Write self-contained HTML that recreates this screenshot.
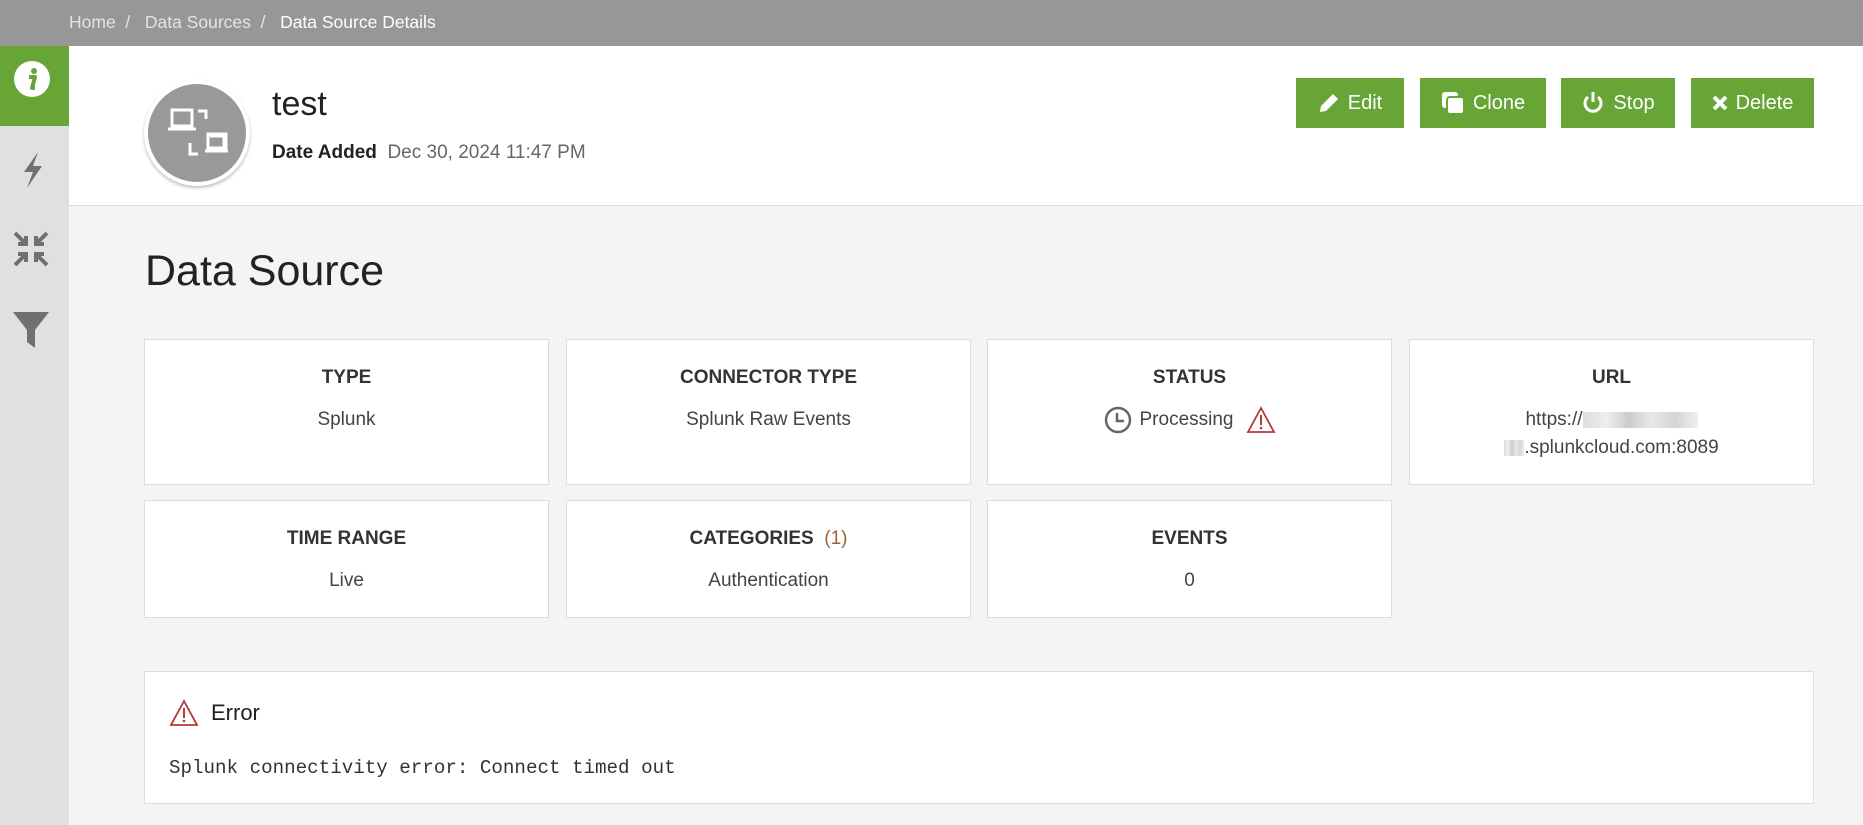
<!DOCTYPE html>
<html><head><meta charset="utf-8"><style>
*{box-sizing:border-box;margin:0;padding:0}
body{width:1863px;height:825px;overflow:hidden;background:#f4f4f4;font-family:"Liberation Sans",sans-serif;color:#333;position:relative}
.bc{position:absolute;left:0;top:0;width:1863px;height:46px;background:#979797;color:#e4e4e4;font-size:17.5px;line-height:44px;padding-left:69px}
.bc b{color:#fff;font-weight:normal}
.side{position:absolute;left:0;top:46px;width:69px;height:779px;background:#e0e0e0}
.act{position:absolute;left:0;top:0;width:69px;height:80px;background:#66a536}
.hdr{position:absolute;left:69px;top:46px;width:1794px;height:160px;background:#fff;border-bottom:1px solid #ddd}
.av{position:absolute;left:144px;top:80px;width:106px;height:106px;border-radius:50%;background:#999;border:4px solid #fff;box-shadow:0 2px 3px rgba(0,0,0,.25)}
.btn{position:absolute;top:77px;height:50px;background:#66a536;color:#fff;font-size:20px;line-height:50px;display:flex;align-items:center;justify-content:center;gap:8px}
.card{position:absolute;background:#fff;border:1px solid #ddd;text-align:center}
.card .t{font-weight:bold;font-size:19px;color:#333;margin-top:27px}
.card .v{font-size:19px;color:#444;margin-top:17px;line-height:28px}
.blur{display:inline-block;height:16px;background:linear-gradient(90deg,#ddd,#eee,#ccc,#e8e8e8,#d5d5d5,#eee);vertical-align:middle}
</style></head><body>
<div class="bc">Home &nbsp;/ &nbsp; Data Sources &nbsp;/ &nbsp; <b>Data Source Details</b></div>
<div class="side">
 <div class="act"><svg style="position:absolute;left:13px;top:14px" width="38" height="38" viewBox="0 0 38 38"><circle cx="19" cy="19" r="18" fill="#fff"/><circle cx="21" cy="11" r="3" fill="#66a536"/><path d="M16 17h6l-3 11h3" stroke="#66a536" stroke-width="4" fill="none" stroke-linejoin="round"/></svg></div>
 <svg style="position:absolute;left:18px;top:104px" width="30" height="40" viewBox="0 0 30 40"><path d="M20 2L6 22h9L9 38 24 16h-9z" fill="#707070"/></svg>
 <svg style="position:absolute;left:12px;top:184px" width="38" height="38" viewBox="0 0 38 38" stroke="#707070" stroke-width="4" fill="none"><path d="M3 3l11 11M14 6v8H6M35 3L24 14M24 6v8h8M3 35l11-11M6 24h8v8M35 35L24 24M32 24h-8v8"/></svg>
 <svg style="position:absolute;left:11px;top:264px" width="40" height="40" viewBox="0 0 40 40"><path d="M2 2h36L24 20v18l-8-6V20z" fill="#707070"/></svg>
</div>
<div class="hdr"></div>
<div class="av"><svg style="position:absolute;left:20px;top:22px" width="60" height="56" viewBox="0 0 60 56" fill="none" stroke="#fff" stroke-width="3"><rect x="4" y="4" width="20" height="16"/><path d="M0 23h28M30 5h8v8M22 37v11h8M42 30h14v12"/><rect x="40" y="28" width="18" height="14"/><path d="M37 45h23"/></svg></div>
<div style="position:absolute;left:272px;top:85px;font-size:34px;color:#222">test</div>
<div style="position:absolute;left:272px;top:142px;font-size:19px;color:#222"><b>Date Added</b>&nbsp; <span style="color:#666">Dec 30, 2024 11:47 PM</span></div>
<div class="btn" style="left:1296px;width:108px;top:78px"><svg width="22" height="22" viewBox="0 0 22 22"><path d="M2 20l1-6L15 2l5 5L8 19z" fill="#fff"/></svg>Edit</div>
<div class="btn" style="left:1420px;width:126px;top:78px"><svg width="24" height="24" viewBox="0 0 24 24"><rect x="1" y="1" width="16" height="16" rx="3" fill="#fff"/><rect x="6" y="6" width="17" height="17" rx="3" fill="#fff" stroke="#66a536" stroke-width="2"/></svg>Clone</div>
<div class="btn" style="left:1561px;width:114px;top:78px"><svg width="24" height="24" viewBox="0 0 24 24" fill="none" stroke="#fff" stroke-width="3"><path d="M7 6a8 8 0 1 0 10 0M12 1v10"/></svg>Stop</div>
<div class="btn" style="left:1691px;width:123px;top:78px"><svg width="16" height="16" viewBox="0 0 16 16" stroke="#fff" stroke-width="4"><path d="M2 2l12 12M14 2L2 14"/></svg>Delete</div>
<div style="position:absolute;left:145px;top:247px;font-size:43px;color:#222">Data Source</div>
<div class="card" style="left:144px;top:339px;width:405px;height:146px"><div class="t">TYPE</div><div class="v">Splunk</div></div>
<div class="card" style="left:566px;top:339px;width:405px;height:146px"><div class="t">CONNECTOR TYPE</div><div class="v">Splunk Raw Events</div></div>
<div class="card" style="left:987px;top:339px;width:405px;height:146px"><div class="t">STATUS</div><div class="v" style="display:flex;justify-content:center;align-items:center;gap:8px"><svg width="28" height="28" viewBox="0 0 28 28" fill="none" stroke="#666" stroke-width="2.5"><circle cx="14" cy="14" r="12"/><path d="M13 7v8h7"/></svg>Processing<svg style="margin-left:4px" width="30" height="28" viewBox="0 0 30 28"><path d="M15 2L2 26h26z" fill="none" stroke="#b03a3a" stroke-width="1.8"/><path d="M15 9v10" stroke="#b03a3a" stroke-width="2"/><circle cx="15" cy="22" r="1.3" fill="#b03a3a"/></svg></div></div>
<div class="card" style="left:1409px;top:339px;width:405px;height:146px"><div class="t">URL</div><div class="v">https://<span class="blur" style="width:115px"></span><br><span class="blur" style="width:20px"></span>.splunkcloud.com:8089</div></div>
<div class="card" style="left:144px;top:500px;width:405px;height:118px"><div class="t">TIME RANGE</div><div class="v">Live</div></div>
<div class="card" style="left:566px;top:500px;width:405px;height:118px"><div class="t">CATEGORIES <span style="font-weight:normal;color:#a0622d">&nbsp;(1)</span></div><div class="v">Authentication</div></div>
<div class="card" style="left:987px;top:500px;width:405px;height:118px"><div class="t">EVENTS</div><div class="v">0</div></div>
<div class="card" style="left:144px;top:671px;width:1670px;height:133px;text-align:left">
 <div style="position:absolute;left:24px;top:27px;display:flex;align-items:center;gap:12px;font-size:22px;color:#222"><svg width="30" height="28" viewBox="0 0 30 28"><path d="M15 2L2 26h26z" fill="none" stroke="#b03a3a" stroke-width="1.8"/><path d="M15 9v10" stroke="#b03a3a" stroke-width="2"/><circle cx="15" cy="22" r="1.3" fill="#b03a3a"/></svg>Error</div>
 <div style="position:absolute;left:24px;top:85px;font-family:'Liberation Mono',monospace;font-size:19.2px;color:#333">Splunk connectivity error: Connect timed out</div>
</div>
</body></html>
